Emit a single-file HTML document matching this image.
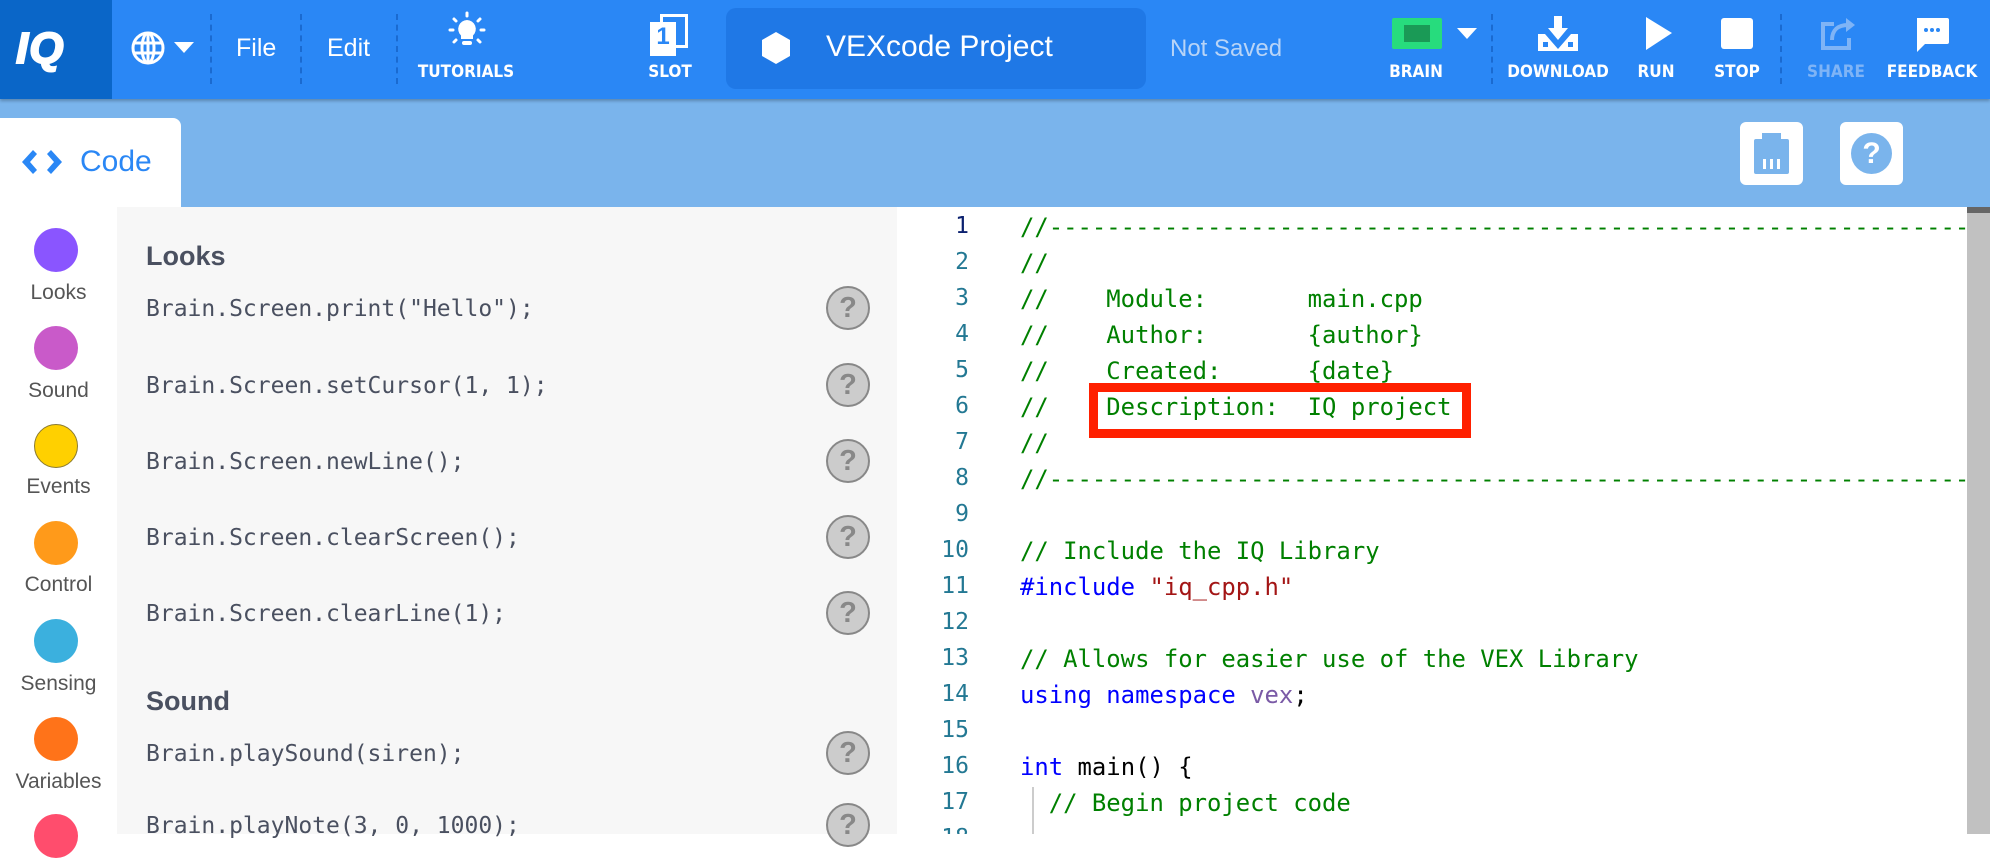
<!DOCTYPE html>
<html><head><meta charset="utf-8"><style>
*{margin:0;padding:0;box-sizing:border-box}
body{width:1990px;height:834px;overflow:hidden;position:relative;background:#fff;font-family:"Liberation Sans",sans-serif}
.abs{position:absolute}
#top{left:0;top:0;width:1990px;height:99px;background:#2a87f5;box-shadow:0 2px 3px rgba(0,0,0,.25);z-index:2}
.sep{position:absolute;top:14px;height:70px;border-left:2px dashed #1a6ad0}
.lbl{position:absolute;top:62px;color:#fff;font-weight:bold;font-size:17px;transform:translateX(-50%);white-space:nowrap;font-family:"DejaVu Sans Condensed","Liberation Sans",sans-serif}
.menu{position:absolute;top:34px;color:#fff;font-size:25px}
#band{left:0;top:99px;width:1990px;height:108px;background:#7ab4ec}
#cats{left:0;top:207px;width:117px;height:627px;background:#fff}
.dot{position:absolute;left:34px;width:44px;height:44px;border-radius:50%}
.cl{position:absolute;left:0;width:117px;text-align:center;font-size:21px;color:#555}
#pal{left:117px;top:207px;width:780px;height:627px;background:#f7f7f7}
.h{position:absolute;left:29px;font-size:27px;font-weight:bold;color:#4a5060}
.cd{position:absolute;left:29px;font-family:"DejaVu Sans Mono","Liberation Mono",monospace;font-size:23px;color:#4a5060;white-space:pre}
.q{position:absolute;left:709px;width:44px;height:44px;border-radius:50%;background:#ccc;border:2px solid #888;color:#888;font-weight:bold;font-size:29px;text-align:center;line-height:40px}
#ed{left:897px;top:207px;width:1093px;height:627px;background:#fff;overflow:hidden}
.ln{position:absolute;left:0;width:72px;text-align:right;font-family:"DejaVu Sans Mono",monospace;font-size:23px;color:#237893}
.tx{position:absolute;left:123px;font-family:"DejaVu Sans Mono",monospace;font-size:23.9px;color:#008000;white-space:pre}
</style></head><body>
<div id="top" class="abs">
 <div class="abs" style="left:0;top:0;width:112px;height:99px;background:#0a66c8"></div>
 <div class="abs" style="left:16px;top:24px;color:#fff;font-size:44px;font-weight:900;font-style:italic;font-family:'Liberation Sans',sans-serif;letter-spacing:1px;-webkit-text-stroke:2px #fff">IQ</div>
 <svg class="abs" style="left:130px;top:30px" width="36" height="36" viewBox="0 0 36 36" fill="none" stroke="#fff" stroke-width="3"><circle cx="18" cy="18" r="15"/><ellipse cx="18" cy="18" rx="6" ry="15"/><line x1="3" y1="13" x2="33" y2="13"/><line x1="3" y1="23" x2="33" y2="23"/><line x1="18" y1="3" x2="18" y2="33"/></svg>
 <svg class="abs" style="left:174px;top:42px" width="20" height="12"><polygon points="0,0 20,0 10,11" fill="#fff"/></svg>
 <div class="sep" style="left:210px"></div><div class="sep" style="left:300px"></div><div class="sep" style="left:396px"></div>
 <div class="menu" style="left:236px">File</div><div class="menu" style="left:327px">Edit</div>
 <svg class="abs" style="left:448px;top:11px" width="38" height="38" viewBox="0 0 38 38"><g stroke="#fff" stroke-width="3" stroke-linecap="round"><line x1="19" y1="2" x2="19" y2="5"/><line x1="6" y1="8" x2="8" y2="10"/><line x1="32" y1="8" x2="30" y2="10"/><line x1="2" y1="19" x2="5" y2="19"/><line x1="33" y1="19" x2="36" y2="19"/><line x1="8" y1="29" x2="6" y2="31"/><line x1="30" y1="29" x2="32" y2="31"/></g><path d="M19 9a9 9 0 0 0-6 15.5V28h12v-3.5A9 9 0 0 0 19 9z" fill="#fff"/><rect x="14" y="30" width="10" height="4" rx="2" fill="#fff"/></svg>
 <div class="lbl" style="left:466px">TUTORIALS</div>
 <div class="abs" style="left:660px;top:14px;width:28px;height:34px;border:3px solid #fff"></div>
 <div class="abs" style="left:650px;top:22px;width:26px;height:34px;background:#fff;color:#2a87f5;font-weight:bold;font-size:24px;text-align:center;line-height:30px">1</div>
 <div class="lbl" style="left:670px">SLOT</div>
 <div class="abs" style="left:726px;top:8px;width:420px;height:81px;background:#1f78e6;border-radius:10px"></div>
 <svg class="abs" style="left:762px;top:32px" width="28" height="32"><polygon points="14,0 28,8 28,24 14,32 0,24 0,8" fill="#fff"/></svg>
 <div class="abs" style="left:826px;top:30px;color:#fff;font-size:30px">VEXcode Project</div>
 <div class="abs" style="left:1170px;top:35px;color:#b8d4f7;font-size:24px">Not Saved</div>
 <div class="abs" style="left:1392px;top:18px;width:50px;height:31px;background:#27dc7d;border-radius:2px"><div style="position:absolute;left:12px;top:7px;width:26px;height:17px;background:#1a9a56"></div></div>
 <svg class="abs" style="left:1457px;top:28px" width="20" height="12"><polygon points="0,0 20,0 10,11" fill="#fff"/></svg>
 <div class="lbl" style="left:1416px">BRAIN</div>
 <div class="sep" style="left:1491px"></div>
 <svg class="abs" style="left:1538px;top:16px" width="40" height="36"><path d="M16 0h8v12h6l-10 12-10-12h6z" fill="#fff"/><path d="M0 18h7l13 15 13-15h7v17H0z" fill="#fff"/><rect x="5" y="26" width="5" height="5" fill="#2a87f5"/><rect x="30" y="26" width="5" height="5" fill="#2a87f5"/></svg>
 <div class="lbl" style="left:1558px">DOWNLOAD</div>
 <svg class="abs" style="left:1646px;top:17px" width="26" height="33"><polygon points="0,0 26,16 0,33" fill="#fff"/></svg>
 <div class="lbl" style="left:1656px">RUN</div>
 <div class="abs" style="left:1721px;top:18px;width:32px;height:31px;background:#fff;border-radius:3px"></div>
 <div class="lbl" style="left:1737px">STOP</div>
 <div class="sep" style="left:1780px"></div>
 <svg class="abs" style="left:1820px;top:14px" width="36" height="36" fill="none" stroke="#7fb4f6" stroke-width="4"><path d="M14 10H3v24h26V24"/><path d="M12 26c0-10 6-15 16-15" /><polygon points="26,4 35,11 26,18" fill="#7fb4f6" stroke="none"/></svg>
 <div class="lbl" style="left:1836px;color:#7fb4f6">SHARE</div>
 <svg class="abs" style="left:1915px;top:18px" width="34" height="34"><path d="M2 0h30a2 2 0 0 1 2 2v22a2 2 0 0 1-2 2H10L2 34z" fill="#fff"/><circle cx="11" cy="12" r="2" fill="#2a87f5"/><circle cx="17" cy="12" r="2" fill="#2a87f5"/><circle cx="23" cy="12" r="2" fill="#2a87f5"/></svg>
 <div class="lbl" style="left:1932px">FEEDBACK</div>
</div>
<div id="band" class="abs">
 <div class="abs" style="left:0;top:19px;width:181px;height:95px;background:#fff;border-radius:0 8px 0 0"></div>
 <svg class="abs" style="left:22px;top:51px" width="40" height="24"><polygon points="11,0 0,12 11,24 15,20 8,12 15,4" fill="#2a87f5"/><polygon points="29,0 40,12 29,24 25,20 32,12 25,4" fill="#2a87f5"/></svg>
 <div class="abs" style="left:80px;top:46px;color:#2a87f5;font-size:30px">Code</div>
 <div class="abs" style="left:1740px;top:23px;width:63px;height:63px;background:#fff;border-radius:6px"><div style="position:absolute;left:14px;top:17px;width:35px;height:35px;background:#7ab4ec;border-radius:2px"></div><div style="position:absolute;left:22px;top:11px;width:19px;height:8px;background:#7ab4ec"></div><div style="position:absolute;left:23px;top:37px;width:3px;height:10px;background:#fff;box-shadow:7px 0 #fff,14px 0 #fff"></div></div>
 <div class="abs" style="left:1840px;top:23px;width:63px;height:63px;background:#fff;border-radius:6px"><div style="position:absolute;left:11px;top:11px;width:41px;height:41px;border-radius:50%;background:#7ab4ec;color:#fff;font-weight:bold;font-size:30px;text-align:center;line-height:41px">?</div></div>
</div>
<div id="cats" class="abs">
 <div class="dot" style="top:21px;background:#8a55ff"></div><div class="cl" style="top:74px">Looks</div>
 <div class="dot" style="top:119px;background:#c95ac9"></div><div class="cl" style="top:172px">Sound</div>
 <div class="dot" style="top:217px;background:#ffd000;border:1px solid #8a7a30"></div><div class="cl" style="top:268px">Events</div>
 <div class="dot" style="top:314px;background:#ff9a1a"></div><div class="cl" style="top:366px">Control</div>
 <div class="dot" style="top:412px;background:#3bb0de"></div><div class="cl" style="top:465px">Sensing</div>
 <div class="dot" style="top:510px;background:#ff7319"></div><div class="cl" style="top:563px">Variables</div>
 <div class="dot" style="top:607px;background:#ff4d6d"></div>
</div>
<div id="pal" class="abs">
 <div class="h" style="top:34px">Looks</div>
 <div class="cd" style="top:89px">Brain.Screen.print("Hello");</div><div class="q" style="top:79px">?</div>
 <div class="cd" style="top:166px">Brain.Screen.setCursor(1, 1);</div><div class="q" style="top:156px">?</div>
 <div class="cd" style="top:242px">Brain.Screen.newLine();</div><div class="q" style="top:232px">?</div>
 <div class="cd" style="top:318px">Brain.Screen.clearScreen();</div><div class="q" style="top:308px">?</div>
 <div class="cd" style="top:394px">Brain.Screen.clearLine(1);</div><div class="q" style="top:384px">?</div>
 <div class="h" style="top:479px">Sound</div>
 <div class="cd" style="top:534px">Brain.playSound(siren);</div><div class="q" style="top:524px">?</div>
 <div class="cd" style="top:606px">Brain.playNote(3, 0, 1000);</div><div class="q" style="top:596px">?</div>
</div>
<div id="ed" class="abs">
 <div class="ln" style="top:6px;color:#0b216f">1</div><div class="ln" style="top:42px">2</div><div class="ln" style="top:78px">3</div><div class="ln" style="top:114px">4</div><div class="ln" style="top:150px">5</div><div class="ln" style="top:186px">6</div><div class="ln" style="top:222px">7</div><div class="ln" style="top:258px">8</div><div class="ln" style="top:294px">9</div><div class="ln" style="top:330px">10</div><div class="ln" style="top:366px">11</div><div class="ln" style="top:402px">12</div><div class="ln" style="top:438px">13</div><div class="ln" style="top:474px">14</div><div class="ln" style="top:510px">15</div><div class="ln" style="top:546px">16</div><div class="ln" style="top:582px">17</div><div class="ln" style="top:618px">18</div>
 <div class="tx" style="top:6px">//--------------------------------------------------------------------------------</div>
 <div class="tx" style="top:42px">//</div>
 <div class="tx" style="top:78px">//    Module:       main.cpp</div>
 <div class="tx" style="top:114px">//    Author:       {author}</div>
 <div class="tx" style="top:150px">//    Created:      {date}</div>
 <div class="tx" style="top:186px">//    Description:  IQ project</div>
 <div class="tx" style="top:222px">//</div>
 <div class="tx" style="top:258px">//--------------------------------------------------------------------------------</div>
 <div class="tx" style="top:330px">// Include the IQ Library</div>
 <div class="tx" style="top:366px"><span style="color:#0000ff">#include</span> <span style="color:#a31515">"iq_cpp.h"</span></div>
 <div class="tx" style="top:438px">// Allows for easier use of the VEX Library</div>
 <div class="tx" style="top:474px"><span style="color:#0000ff">using namespace</span> <span style="color:#7a5aa6">vex</span><span style="color:#000">;</span></div>
 <div class="tx" style="top:546px"><span style="color:#0000ff">int</span><span style="color:#000"> main() {</span></div>
 <div class="tx" style="top:582px">  // Begin project code</div>
 <div class="abs" style="left:135px;top:580px;width:2px;height:60px;background:#ccc"></div>
 <div class="abs" style="left:192px;top:176px;width:382px;height:55px;border:9px solid #ff2000"></div>
 <div class="abs" style="left:1070px;top:0;width:23px;height:627px;background:#c1c1c1"></div>
 <div class="abs" style="left:1070px;top:0;width:23px;height:6px;background:#666"></div>
</div>
</body></html>
